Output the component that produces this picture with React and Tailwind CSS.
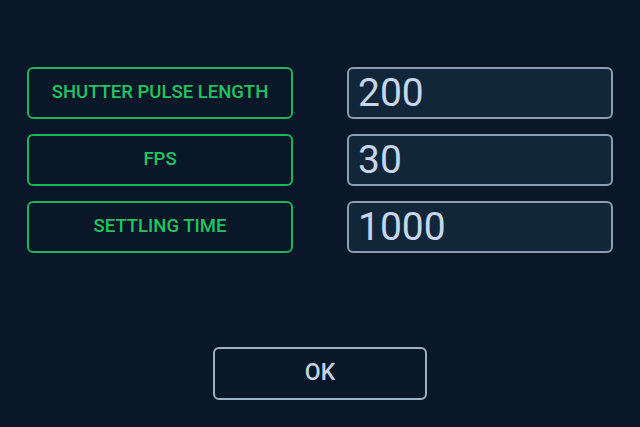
export default function App() {
    const rows = [
        { label: 'SHUTTER PULSE LENGTH', value: '200' },
        { label: 'FPS', value: '30' },
        { label: 'SETTLING TIME', value: '1000' },
    ];

    return (
        <div className="w-[640px] h-[427px] bg-[#0a1728] flex flex-col font-['Roboto',sans-serif]">
            {/* Settings rows */}
            <div className="flex flex-col gap-[15px] pt-[67px] pl-[27px]">
                {rows.map((row) => (
                    <div key={row.label} className="flex items-center gap-[54px]">
                        <button className="w-[266px] h-[52px] rounded-[6px] border-2 border-[#1bb55a] text-[#22c361] text-[18.5px] font-medium flex items-center justify-center">
                            {row.label}
                        </button>
                        <div className="w-[266px] h-[52px] rounded-[6px] border-2 border-[#8b9db2] bg-[#12263a] flex items-center px-[9px]">
                            <span className="text-[39px] text-[#c7d6e8] leading-none">{row.value}</span>
                        </div>
                    </div>
                ))}
            </div>

            {/* Footer */}
            <div className="flex justify-center mt-auto pb-[27px]">
                <button className="w-[214px] h-[53px] rounded-[6px] border-2 border-[#9fb0c2] text-[#c4d2e2] text-[23px] font-medium">
                    OK
                </button>
            </div>
        </div>
    );
}
